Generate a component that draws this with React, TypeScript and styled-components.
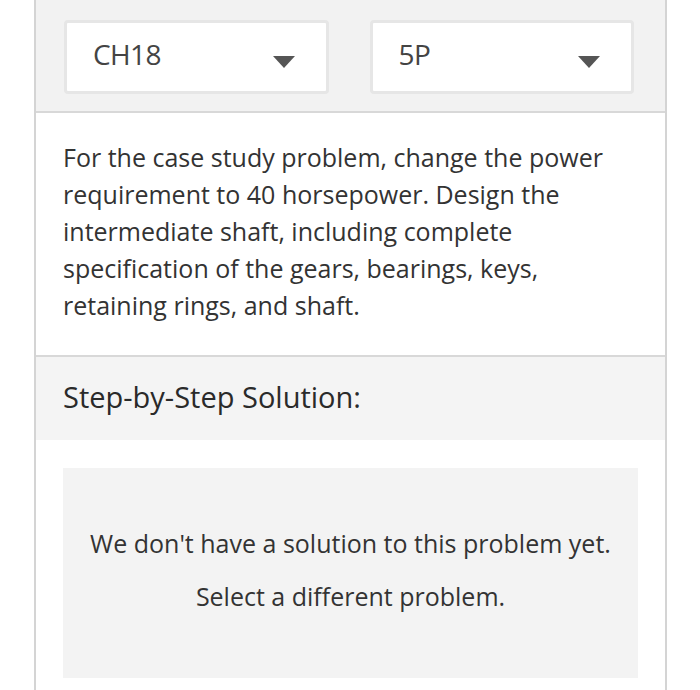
import React from "react";
import styled, { createGlobalStyle } from "styled-components";

const Global = createGlobalStyle`
  html, body { margin: 0; padding: 0; background: #ffffff; }
  body { font-family: "Open Sans", Lato, sans-serif; color: #333333; }
  * { box-sizing: border-box; }
`;

const Card = styled.div`
  margin-left: 34px;
  width: 633px;
  border-left: 2px solid #d4d4d4;
  border-right: 2px solid #d4d4d4;
  display: flex;
  flex-direction: column;
`;

const Toolbar = styled.div`
  background: #f2f2f2;
  border-bottom: 2px solid #d8d8d8;
  padding: 20px 31px 17px 28px;
  display: grid;
  grid-template-columns: 1fr 1fr;
  column-gap: 41px;
`;

const Select = styled.div`
  height: 74px;
  background: #ffffff;
  border: 3px solid #e6e6e6;
  border-radius: 4px;
  display: flex;
  align-items: center;
  justify-content: space-between;
  padding: 0 31px 0 26px;
  font-size: 28px;
  letter-spacing: -0.6px;
  color: #444444;
`;

const Label = styled.span`
  margin-top: -6px;
`;

const Caret = styled.span`
  width: 0;
  height: 0;
  border-left: 11px solid transparent;
  border-right: 11px solid transparent;
  border-top: 12px solid #555555;
  margin-top: 10px;
`;

const Question = styled.div`
  padding: 26px 30px 31px 27px;
  font-size: 25px;
  line-height: 37px;
  color: #333333;
  border-bottom: 2px solid #d8d8d8;
`;

const SectionHeader = styled.div`
  background: #f4f4f4;
  height: 83px;
  display: flex;
  align-items: center;
  padding: 0 0 4px 27px;
  font-size: 29px;
  font-weight: 500;
  color: #2a2a2a;
`;

const Body = styled.div`
  padding: 28px 27px 40px 27px;
`;

const EmptyBox = styled.div`
  background: #f3f3f3;
  height: 210px;
  padding-bottom: 6px;
  display: flex;
  flex-direction: column;
  align-items: center;
  justify-content: center;
  gap: 16px;
  font-size: 25px;
  line-height: 37px;
  color: #333333;
  text-align: center;
`;

const Line = styled.p`
  margin: 0;
`;

export default function App() {
  return (
    <>
      <Global />
      <Card>
        <Toolbar>
          <Select>
            <Label>CH18</Label>
            <Caret />
          </Select>
          <Select>
            <Label>5P</Label>
            <Caret />
          </Select>
        </Toolbar>
        <Question>
          For the case study problem, change the power requirement to 40 horsepower. Design the
          intermediate shaft, including complete specification of the gears, bearings, keys,
          retaining rings, and shaft.
        </Question>
        <SectionHeader>Step-by-Step Solution:</SectionHeader>
        <Body>
          <EmptyBox>
            <Line>We don't have a solution to this problem yet.</Line>
            <Line>Select a different problem.</Line>
          </EmptyBox>
        </Body>
      </Card>
    </>
  );
}
